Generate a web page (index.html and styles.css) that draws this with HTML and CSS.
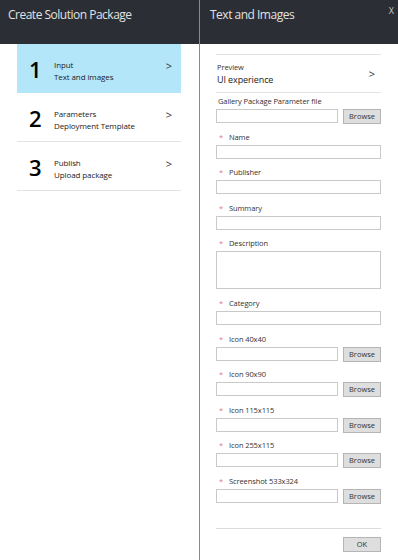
FILE: index.html
```html
<!DOCTYPE html>
<html>
<head>
<meta charset="utf-8">
<link rel="stylesheet" href="styles.css">
</head>
<body>
<div class="app">
  <div class="panel left">
    <div class="header"><span class="title">Create Solution Package</span></div>
    <div class="steps">
      <div class="step active">
        <div class="num">1</div>
        <div class="stext"><div class="s1">Input</div><div class="s2">Text and images</div></div>
        <div class="chev">&gt;</div>
      </div>
      <div class="step">
        <div class="num">2</div>
        <div class="stext"><div class="s1">Parameters</div><div class="s2">Deployment Template</div></div>
        <div class="chev">&gt;</div>
      </div>
      <div class="step">
        <div class="num">3</div>
        <div class="stext"><div class="s1">Publish</div><div class="s2">Upload package</div></div>
        <div class="chev">&gt;</div>
      </div>
    </div>
  </div>
  <div class="panel right">
    <div class="header"><span class="title">Text and Images</span><span class="close">X</span></div>
    <div class="content">
      <div class="preview">
        <div class="ptext"><div class="p1">Preview</div><div class="p2">UI experience</div></div>
        <div class="pchev">&gt;</div>
      </div>
      <div class="field first">
        <div class="label plain">Gallery Package Parameter file</div>
        <div class="row"><div class="input"></div><div class="btn">Browse</div></div>
      </div>
      <div class="field"><div class="label"><span class="req">*</span>Name</div><div class="input"></div></div>
      <div class="field"><div class="label"><span class="req">*</span>Publisher</div><div class="input"></div></div>
      <div class="field"><div class="label"><span class="req">*</span>Summary</div><div class="input"></div></div>
      <div class="field"><div class="label"><span class="req">*</span>Description</div><div class="input area"></div></div>
      <div class="field"><div class="label"><span class="req">*</span>Category</div><div class="input"></div></div>
      <div class="field"><div class="label"><span class="req">*</span>Icon 40x40</div><div class="row"><div class="input"></div><div class="btn">Browse</div></div></div>
      <div class="field"><div class="label"><span class="req">*</span>Icon 90x90</div><div class="row"><div class="input"></div><div class="btn">Browse</div></div></div>
      <div class="field"><div class="label"><span class="req">*</span>Icon 115x115</div><div class="row"><div class="input"></div><div class="btn">Browse</div></div></div>
      <div class="field"><div class="label"><span class="req">*</span>Icon 255x115</div><div class="row"><div class="input"></div><div class="btn">Browse</div></div></div>
      <div class="field"><div class="label"><span class="req">*</span>Screenshot 533x324</div><div class="row"><div class="input"></div><div class="btn">Browse</div></div></div>
      <div class="footer"><div class="btn ok">OK</div></div>
    </div>
  </div>
</div>
</body>
</html>
```
FILE: styles.css
```css
html, body {
  margin: 0;
  padding: 0;
  background: #ffffff;
  font-family: "Open Sans", "Noto Sans", sans-serif;
  color: #1e1e1e;
}
.app {
  display: flex;
  width: 398px;
  height: 560px;
  overflow: hidden;
}
.panel {
  display: flex;
  flex-direction: column;
}
.left {
  width: 199px;
  border-right: 1px solid #8a8a8a;
}
.right {
  width: 198px;
}
.header {
  height: 44px;
  background: #2b2e34;
  color: #e2e2e2;
  display: flex;
  align-items: flex-start;
  justify-content: space-between;
  flex-shrink: 0;
}
.left .title {
  font-size: 12px;
  line-height: 14px;
  margin: 8px 0 0 8px;
  letter-spacing: -0.5px;
}
.right .title {
  font-size: 12px;
  line-height: 14px;
  margin: 8px 0 0 10px;
  letter-spacing: -0.5px;
}
.close {
  font-size: 9px;
  line-height: 10px;
  margin: 6px 4px 0 0;
  color: #c8c8c8;
}
.steps {
  padding: 0 18px 0 17px;
}
.step {
  height: 48px;
  border-bottom: 1px solid #e3e3e3;
  display: flex;
  align-items: flex-start;
}
.step.active {
  background: #b4e6fa;
  border-bottom-color: #b4e6fa;
}
.num {
  width: 37px;
  font-size: 22px;
  line-height: 22px;
  font-weight: 600;
  margin-top: 14px;
  padding-left: 12px;
  box-sizing: border-box;
  color: #000;
}
.stext {
  margin-top: 15px;
  font-size: 8px;
  line-height: 12px;
  color: #222;
  letter-spacing: -0.1px;
  flex: 1;
}
.chev {
  font-size: 11px;
  line-height: 12px;
  margin: 16px 9px 0 0;
  color: #333;
}
.content {
  padding: 0 17px 0 16px;
  flex: 1;
  display: flex;
  flex-direction: column;
}
.preview {
  margin-top: 10px;
  border-top: 1px solid #e3e3e3;
  border-bottom: 1px solid #e3e3e3;
  height: 37px;
  display: flex;
  align-items: flex-start;
  justify-content: space-between;
}
.ptext {
  margin: 7px 0 0 1px;
  letter-spacing: -0.1px;
}
.p1 {
  font-size: 7.5px;
  line-height: 11px;
  color: #333;
}
.p2 {
  font-size: 9px;
  line-height: 14px;
  color: #222;
}
.pchev {
  font-size: 11px;
  line-height: 12px;
  margin: 13px 6px 0 0;
  color: #333;
}
.field {
  margin-bottom: 7.6px;
}
.field.first {
  margin-top: 2px;
}
.label {
  font-size: 7.5px;
  line-height: 12px;
  height: 12px;
  margin-bottom: 2px;
  color: #333;
  letter-spacing: -0.1px;
  padding-left: 3px;
}
.label.plain {
  padding-left: 2px;
}
.req {
  color: #e07a8a;
  display: inline-block;
  width: 10px;
}
.row {
  display: flex;
  gap: 5px;
  height: 14px;
}
.input {
  height: 14px;
  box-sizing: border-box;
  border: 1px solid #c9c9c9;
  background: #fff;
  flex: 1;
}
.input.area {
  height: 38px;
}
.btn {
  width: 38px;
  height: 15px;
  box-sizing: border-box;
  border: 1px solid #b5b5b5;
  background: #dedede;
  font-size: 7.5px;
  line-height: 13px;
  text-align: center;
  color: #333;
}
.footer {
  margin-top: 17px;
  border-top: 1px solid #dcdcdc;
  padding-top: 8px;
  display: flex;
  justify-content: flex-end;
}
```
